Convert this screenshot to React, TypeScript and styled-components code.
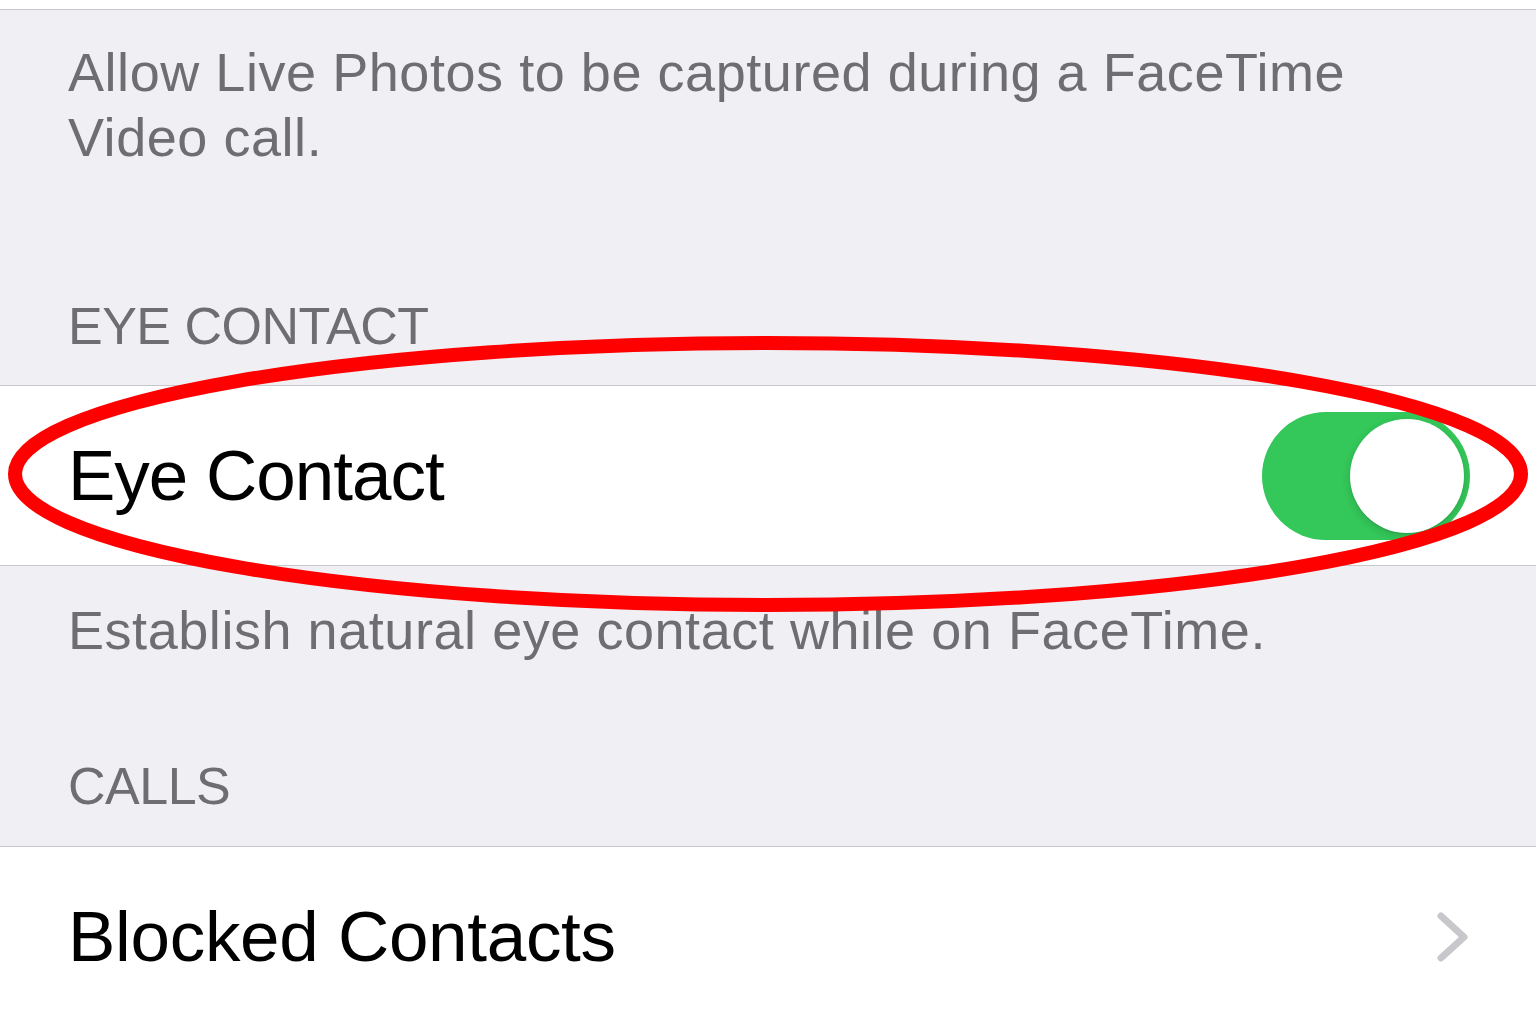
import * as React from 'react';
import styled, { createGlobalStyle } from 'styled-components';

const GlobalStyle = createGlobalStyle`
  html, body {
    margin: 0;
    padding: 0;
    background: #efeff4;
  }
  body {
    font-family: "Liberation Sans", Arial, sans-serif;
    -webkit-font-smoothing: antialiased;
  }
`;

const Page = styled.div`
  position: relative;
  width: 1536px;
  height: 1024px;
  overflow: hidden;
  background: #efeff4;
`;

const TopCell = styled.div`
  height: 9px;
  background: #ffffff;
  border-bottom: 1px solid #c8c7cc;
`;

interface BlockProps {
  $top: number;
  $bottom: number;
}

const Footer = styled.div<BlockProps>`
  padding: ${p => p.$top}px 150px ${p => p.$bottom}px 68px;
  font-size: 54px;
  line-height: 65px;
  color: #6d6d72;
  letter-spacing: 0.55px;
`;

const Header = styled.div<BlockProps>`
  padding: ${p => p.$top}px 68px ${p => p.$bottom}px;
  font-size: 52px;
  line-height: 65px;
  color: #6d6d72;
  text-transform: uppercase;
  letter-spacing: -0.5px;
`;

const Row = styled.div<{ $last?: boolean }>`
  display: flex;
  align-items: center;
  justify-content: space-between;
  height: 179px;
  padding: 0 66px 0 68px;
  background: #ffffff;
  border-top: 1px solid #c8c7cc;
  border-bottom: ${p => (p.$last ? 'none' : '1px solid #c8c7cc')};
`;

const Label = styled.span<{ $tight?: boolean }>`
  font-size: 71px;
  color: #000000;
  letter-spacing: ${p => (p.$tight ? '-1px' : '-0.3px')};
`;

const Toggle = styled.div<{ $on: boolean }>`
  position: relative;
  width: 208px;
  height: 128px;
  border-radius: 64px;
  background: ${p => (p.$on ? '#34c759' : '#e9e9ea')};
`;

const Knob = styled.div<{ $on: boolean }>`
  position: absolute;
  top: 7px;
  ${p => (p.$on ? 'right: 6px;' : 'left: 6px;')}
  width: 114px;
  height: 114px;
  border-radius: 50%;
  background: #ffffff;
  box-shadow: 0 3px 8px rgba(0, 0, 0, 0.15), 0 1px 1px rgba(0, 0, 0, 0.1);
`;

const Annotation = styled.svg`
  position: absolute;
  left: 0;
  top: 0;
  pointer-events: none;
`;

const Chevron = () => (
  <svg width="34" height="52" viewBox="0 0 34 52">
    <path
      d="M5 5 L28 26 L5 47"
      fill="none"
      stroke="#c7c7cc"
      strokeWidth="7"
      strokeLinecap="round"
      strokeLinejoin="round"
    />
  </svg>
);

const App = () => (
  <Page>
    <GlobalStyle />
    <TopCell />
    <Footer $top={30} $bottom={124}>
      Allow Live Photos to be captured during a FaceTime Video call.
    </Footer>
    <Header $top={0} $bottom={26}>Eye Contact</Header>
    <Row>
      <Label $tight>Eye Contact</Label>
      <Toggle $on>
        <Knob $on />
      </Toggle>
    </Row>
    <Footer $top={32} $bottom={91}>
      Establish natural eye contact while on FaceTime.
    </Footer>
    <Header $top={0} $bottom={27}>Calls</Header>
    <Row $last>
      <Label>Blocked Contacts</Label>
      <Chevron />
    </Row>
    <Annotation width="1536" height="1024" viewBox="0 0 1536 1024">
      <ellipse cx="768" cy="474" rx="753" ry="131" fill="none" stroke="#ff0000" strokeWidth="14" />
    </Annotation>
  </Page>
);

export default App;
